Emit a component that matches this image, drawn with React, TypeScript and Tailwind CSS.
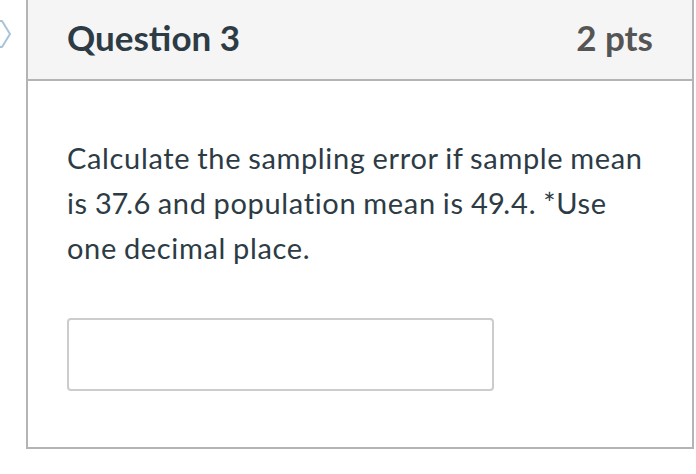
export default function App() {
  return (
    <div className="relative h-[474px] w-[696px] overflow-hidden bg-white font-['Lato',sans-serif]">
      {/* question nav arrow peeking in from the left */}
      <svg className="absolute left-0 top-[19px]" width="12" height="30" viewBox="0 0 12 30">
        <path d="M-4 2 L2 2 L10 15 L2 28 L-4 28" fill="none" stroke="#a9c4d6" strokeWidth="2" strokeLinejoin="round" />
      </svg>

      <div className="ml-[26px] w-[668px] border-x-[2px] border-b-[2px] border-[#b4b4b4]">
        <div className="flex h-[81px] items-center justify-between border-b-[2px] border-[#b4b4b4] bg-[#f5f5f5] pb-[4px] pl-[39px] pr-[39px]">
          <h2 className="text-[35px] font-bold leading-none text-[#2d3b45]">Question 3</h2>
          <span className="text-[35px] font-bold leading-none text-[#555]">2 pts</span>
        </div>

        <div className="pl-[39px] pt-[54px] pb-[56px]">
          <p className="w-[584px] text-[29px] leading-[45px] tracking-[0.65px] [word-spacing:-1px] proportional-nums text-[#2d3b45]">
            Calculate the sampling error if sample mean is 37.6 and population mean is 49.4. *Use one decimal place.
          </p>
          <input
            type="text"
            className="mt-[48px] block h-[73px] w-[427px] rounded-[4px] border-[2px] border-[#ccc] bg-white"
          />
        </div>
      </div>
    </div>
  );
}
